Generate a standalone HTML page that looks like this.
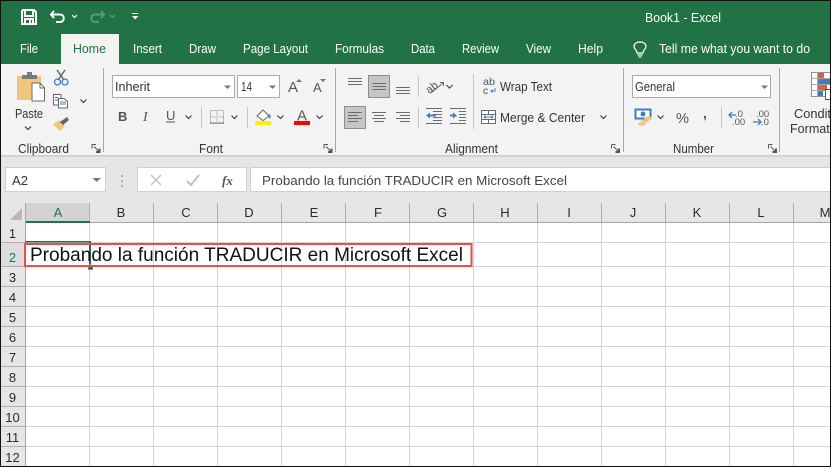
<!DOCTYPE html>
<html><head><meta charset="utf-8"><style>
html,body{margin:0;padding:0;width:831px;height:467px;overflow:hidden;background:#fff}
svg{display:block;position:absolute;left:0;top:0}
text{font-family:"Liberation Sans",sans-serif;font-size:13px;fill:#333}
.t{fill:#fff}
.h{fill:#2b2b2b;font-size:13px;text-anchor:middle}
.ln{stroke:#6a6a6a;stroke-width:1;fill:none}
.ch{stroke:#444;stroke-width:1.2;fill:none}
</style></head><body>
<svg width="831" height="467" viewBox="0 0 831 467" xmlns="http://www.w3.org/2000/svg">
<defs>
<path id="c" class="ch" d="M-3 -1.500L0 1.500L3 -1.500"/>
<g id="launch"><path d="M-4 -4H0M-4 -4V0M4 0V4H0M-2 -2L3 3M0 3H3V0" stroke="#555" fill="none" stroke-width="1"/></g>
</defs>
<!-- title bar -->
<rect width="831" height="64" fill="#217346"/>
<rect x="61" y="34" width="58" height="30" fill="#f3f3f3"/>
<rect y="64" width="831" height="91" fill="#f3f3f3"/>
<rect y="155" width="831" height="2" fill="#d2d2d2"/>
<rect y="157" width="831" height="46" fill="#e6e6e6"/>
<!-- QAT -->
<path d="M23 10H34L36 12V24H22V11Z M25 11V16H33V11 M25 24V19H33V24" fill="none" stroke="#fff" stroke-width="2"/>
<rect x="29" y="20" width="2" height="3" fill="#fff"/>
<path d="M54 11L51 14.500L54 18M52 14.500H60C65 14.500 65 22 60 22H56" fill="none" stroke="#fff" stroke-width="2"/>
<path d="M72 15l2.500 2.500l2.500 -2.500" fill="none" stroke="#fff" stroke-width="1.200"/>
<path d="M101 11L104 14.500L101 18M103 14.500H95C90 14.500 90 22 95 22H99" fill="none" stroke="#5c9a7b" stroke-width="2"/>
<path d="M110 15l2.500 2.500l2.500 -2.500" fill="none" stroke="#5c9a7b" stroke-width="1.200"/>
<path d="M132 13.500H138" stroke="#fff"/><path d="M132 16H138.500L135.200 19.500Z" fill="#fff"/>
<text class="t" x="645" y="22" textLength="76" lengthAdjust="spacingAndGlyphs">Book1  -  Excel</text>
<!-- tabs -->
<text class="t" x="20" y="53" textLength="18" lengthAdjust="spacingAndGlyphs">File</text>
<text x="73" y="53" textLength="33" lengthAdjust="spacingAndGlyphs" style="fill:#217346">Home</text>
<text class="t" x="133" y="53" textLength="29" lengthAdjust="spacingAndGlyphs">Insert</text>
<text class="t" x="189" y="53" textLength="27" lengthAdjust="spacingAndGlyphs">Draw</text>
<text class="t" x="243" y="53" textLength="65" lengthAdjust="spacingAndGlyphs">Page Layout</text>
<text class="t" x="335" y="53" textLength="49" lengthAdjust="spacingAndGlyphs">Formulas</text>
<text class="t" x="411" y="53" textLength="24" lengthAdjust="spacingAndGlyphs">Data</text>
<text class="t" x="462" y="53" textLength="37" lengthAdjust="spacingAndGlyphs">Review</text>
<text class="t" x="526" y="53" textLength="25" lengthAdjust="spacingAndGlyphs">View</text>
<text class="t" x="578" y="53" textLength="25" lengthAdjust="spacingAndGlyphs">Help</text>
<path d="M637 53C637 50 634 49 634 46.500C634 43.500 637 42 640 42C643 42 646 43.500 646 46.500C646 49 643 50 643 53ZM637.500 55H642.500M638.500 57H641.500" fill="none" stroke="#fff" stroke-width="1.200"/>
<text class="t" x="659" y="53" textLength="151" lengthAdjust="spacingAndGlyphs">Tell me what you want to do</text>
<!-- separators -->
<g fill="#a8a8a8">
<rect x="103" y="68" width="1" height="84"/><rect x="335" y="68" width="1" height="84"/>
<rect x="623" y="68" width="1" height="84"/><rect x="779" y="68" width="1" height="84"/>
</g>
<g fill="#c6c6c6">
<rect x="201" y="107" width="1" height="21"/><rect x="247" y="107" width="1" height="21"/>
<rect x="418" y="76" width="1" height="21"/><rect x="418" y="107" width="1" height="21"/>
<rect x="473" y="74" width="1" height="55"/><rect x="721" y="107" width="1" height="21"/>
</g>
<!-- clipboard -->
<path d="M17 76H41V100H17Z" fill="#f0c67c"/><rect x="22" y="75" width="15" height="4" fill="#7a7a7a"/><rect x="27" y="72" width="5" height="4" fill="#7a7a7a"/>
<path d="M32 83H40L44.500 88V101H32Z" fill="#fff" stroke="#6a6a6a"/><path d="M40 83V88H44.500" fill="none" stroke="#6a6a6a"/>
<text x="15" y="118" textLength="28" lengthAdjust="spacingAndGlyphs">Paste</text>
<use href="#c" x="28" y="128"/>
<path d="M57 70L64 80M65 70L58 80" stroke="#666" stroke-width="1.500"/>
<circle cx="57.500" cy="82" r="3" fill="none" stroke="#3f7fc0" stroke-width="1.300"/><circle cx="65" cy="82" r="3" fill="none" stroke="#3f7fc0" stroke-width="1.300"/>
<path d="M53.500 94.500H61V105H53.500Z" fill="#fff" stroke="#666"/><path d="M58.500 98.500H64L67.500 101.500V108H58.500Z" fill="#fff" stroke="#666"/>
<path d="M60 102H66M60 104H66" stroke="#3f7fc0"/><path d="M55 97.500H58M55 100H58" stroke="#666"/>
<use href="#c" x="83.500" y="101"/>
<path d="M53 124L60 120L65 126L60 131Z" fill="#f0c67c"/><path d="M60 122L67 117L69 120L63 125Z" fill="#666"/>
<text x="18" y="153" textLength="51" lengthAdjust="spacingAndGlyphs">Clipboard</text>
<use href="#launch" x="96" y="148.500"/>
<!-- font -->
<rect x="112.500" y="75.500" width="122" height="22" fill="#fff" stroke="#ababab"/>
<text x="115" y="91" textLength="35" lengthAdjust="spacingAndGlyphs">Inherit</text>
<path d="M224 85.500H231L227.500 89Z" fill="#777"/>
<rect x="237.500" y="75.500" width="42" height="22" fill="#fff" stroke="#ababab"/>
<text x="241" y="91" textLength="11" lengthAdjust="spacingAndGlyphs">14</text>
<path d="M269 85.500H276L272.500 89Z" fill="#777"/>
<text x="288" y="92" style="font-size:15px;fill:#555">A</text><path d="M296 82H302L299 79Z" fill="#3f7fc0"/>
<text x="313" y="92" style="font-size:13px;fill:#555">A</text><path d="M320 79H326L323 82Z" fill="#3f7fc0"/>
<text x="118" y="121" style="font-weight:bold;fill:#555">B</text>
<text x="143" y="121" style="font-style:italic;font-family:'Liberation Serif',serif;font-size:14px;fill:#555">I</text>
<text x="166" y="120" style="fill:#555">U</text><rect x="166" y="121.500" width="9" height="1" fill="#555"/>
<use href="#c" x="188.500" y="117"/>
<path d="M210.500 110.500H223.500V123.500H210.500ZM217 110.500V123.500M210.500 117H223.500" fill="none" stroke="#8c8c8c" stroke-dasharray="1 1"/>
<rect x="210" y="122.500" width="14" height="1" fill="#777"/>
<use href="#c" x="234.500" y="117"/>
<path d="M257 116L263 110L269 116L263 120.500Z" fill="#fff" stroke="#666"/><path d="M268 114C271 114 271 118 270 119C269 118 268 116 268 114Z" fill="#3f7fc0"/>
<rect x="255" y="121" width="16" height="4" fill="#fff200"/>
<use href="#c" x="280.500" y="117"/>
<text x="297" y="120.500" style="font-size:15px;fill:#555">A</text>
<rect x="294" y="121" width="16" height="4" fill="#f00"/>
<use href="#c" x="319.500" y="117"/>
<text x="199" y="153" textLength="24" lengthAdjust="spacingAndGlyphs">Font</text>
<use href="#launch" x="328" y="148.500"/>
<!-- alignment -->
<rect x="368.500" y="75.500" width="21" height="22" fill="#c6c6c6" stroke="#8f8f8f"/>
<rect x="344.500" y="106.500" width="21" height="22" fill="#c6c6c6" stroke="#8f8f8f"/>
<path class="ln" d="M348 78.500H362M348 81.500H362M348 84.500H362 M372.500 83.500H386M372.500 86.500H386M372.500 89.500H386 M396 87.500H410M396 90.500H410M396 93.500H410"/>
<path class="ln" d="M348 112.500H362M348 115.500H358M348 118.500H362M348 121.500H358 M372 112.500H386M374 115.500H384M372 118.500H386M374 121.500H384 M396 112.500H410M400 115.500H410M396 118.500H410M400 121.500H410"/>
<text x="425" y="90" transform="rotate(-38 433 86)" style="font-size:11px;fill:#555">ab</text>
<path d="M431 93L443 83M440 82.500H443.500V86" fill="none" stroke="#666"/>
<use href="#c" x="449.500" y="86.500"/>
<path class="ln" d="M433 111.500H442M433 114.500H442M433 117.500H442M433 120.500H442M426 123.500H442 M426 108.500H442"/>
<path d="M426 115.500L430 112.500V114.500H436V116.500H430V118.500Z" fill="#3f7fc0"/>
<path class="ln" d="M459 111.500H466M459 114.500H466M459 117.500H466M459 120.500H466M450 123.500H466 M450 108.500H466"/>
<path d="M457 115.500L453 112.500V114.500H450V116.500H453V118.500Z" fill="#3f7fc0"/>
<text x="483" y="85" style="font-size:10.500px;fill:#555" textLength="12" lengthAdjust="spacingAndGlyphs">ab</text>
<text x="483" y="94" style="font-size:10.500px;fill:#555">c</text>
<path d="M495 88V91H491M492.500 89.500L491 91L492.500 92.500" fill="none" stroke="#3f7fc0"/>
<text x="500" y="91" textLength="52" lengthAdjust="spacingAndGlyphs">Wrap Text</text>
<rect x="481.500" y="110.500" width="14" height="13" fill="#fff" stroke="#6a6a6a"/>
<path d="M481.500 114.500H495.500M481.500 119.500H495.500M488.500 110.500V114.500M488.500 119.500V123.500" stroke="#6a6a6a" fill="none"/>
<path d="M484 117H493M485.500 115.500L484 117L485.500 118.500M491.500 115.500L493 117L491.500 118.500" stroke="#3f7fc0" fill="none"/>
<text x="500" y="122" textLength="85" lengthAdjust="spacingAndGlyphs">Merge &amp; Center</text>
<use href="#c" x="603.500" y="117"/>
<text x="445" y="153" textLength="53" lengthAdjust="spacingAndGlyphs">Alignment</text>
<use href="#launch" x="615.500" y="148.500"/>
<!-- number -->
<rect x="632.500" y="75.500" width="138" height="22" fill="#fff" stroke="#ababab"/>
<text x="635" y="91" textLength="40" lengthAdjust="spacingAndGlyphs">General</text>
<path d="M761 85.500H768L764.500 89Z" fill="#777"/>
<rect x="635.500" y="109.500" width="15" height="9" fill="#fff" stroke="#3f7fc0" stroke-width="2"/>
<circle cx="643" cy="114" r="2.500" fill="#3f7fc0"/>
<ellipse cx="648" cy="118" rx="4" ry="1.700" fill="#f0c67c"/><ellipse cx="645" cy="121" rx="4" ry="1.700" fill="#f0c67c"/><ellipse cx="642" cy="124" rx="4" ry="1.700" fill="#f0c67c"/>
<use href="#c" x="660.500" y="117"/>
<text x="676" y="123" style="font-size:15px;fill:#555" textLength="13" lengthAdjust="spacingAndGlyphs">%</text>
<text x="703" y="118" style="font-size:14px;font-weight:bold;fill:#555">,</text>
<text x="735" y="117" style="font-size:9.500px;fill:#555">.0</text><text x="732" y="125" style="font-size:9.500px;fill:#555">.00</text>
<path d="M729 115H736M732 112L729 115L732 118" stroke="#3f7fc0" fill="none" stroke-width="1.300"/>
<text x="756" y="117" style="font-size:9.500px;fill:#555">.00</text><text x="761" y="125" style="font-size:9.500px;fill:#555">.0</text>
<path d="M753 122H761M758 119L761 122L758 125" stroke="#3f7fc0" fill="none" stroke-width="1.300"/>
<text x="673" y="153" textLength="41" lengthAdjust="spacingAndGlyphs">Number</text>
<use href="#launch" x="772.500" y="148.500"/>
<!-- conditional -->
<rect x="811.500" y="72.500" width="20" height="24" fill="#fff" stroke="#8f8f8f"/>
<path d="M811 78.500H831M811 84.500H831M811 90.500H831M817.500 72V97" stroke="#a8a8a8"/>
<rect x="818" y="73" width="6" height="5" fill="#d8603c"/><rect x="818" y="79" width="13" height="5" fill="#3f7fc0"/><rect x="818" y="85" width="9" height="5" fill="#d8603c"/><rect x="818" y="91" width="5" height="5" fill="#3f7fc0"/>
<rect x="825.500" y="89.500" width="6" height="10" fill="#fff" stroke="#555"/>
<text x="794" y="118" textLength="64" lengthAdjust="spacingAndGlyphs">Conditional</text>
<text x="790" y="133" textLength="60" lengthAdjust="spacingAndGlyphs">Formatting</text>
<!-- formula bar -->
<rect x="5.500" y="167.500" width="100" height="24" fill="#fff" stroke="#cfcfcf"/>
<text x="12" y="185" textLength="16" lengthAdjust="spacingAndGlyphs">A2</text>
<path d="M92.500 178H101L96.700 182Z" fill="#777"/>
<path d="M122 175v2M122 180v2M122 185v2" stroke="#9a9a9a" stroke-width="1.500"/>
<rect x="137.500" y="167.500" width="109" height="24" fill="#fff" stroke="#cfcfcf"/>
<path d="M151 175L161 185M161 175L151 185" stroke="#c2c2c2" stroke-width="1.500"/>
<path d="M187 181L191 185L199 175" stroke="#c2c2c2" stroke-width="2" fill="none"/>
<text x="222" y="185" style="font-family:'Liberation Serif',serif;font-style:italic;font-size:13px;fill:#555;font-weight:bold">fx</text>
<rect x="250.500" y="167.500" width="581" height="24" fill="#fff" stroke="#cfcfcf"/>
<text x="262" y="185" textLength="305" lengthAdjust="spacingAndGlyphs" style="fill:#444">Probando la función TRADUCIR en Microsoft Excel</text>
<!-- headers -->
<rect x="0" y="203" width="831" height="19" fill="#e6e6e6"/>
<rect x="0" y="222" width="25" height="245" fill="#e6e6e6"/>
<rect x="26" y="203" width="64" height="19" fill="#d2d2d2"/>
<rect x="0" y="243" width="25" height="23" fill="#dcdcdc"/>
<path d="M10 220H22V208Z" fill="#b8b8b8"/>
<rect x="25" y="222" width="806" height="245" fill="#fff"/>
<rect x="25" y="222" width="806" height="1" fill="#a6a6a6"/>
<rect x="25" y="203" width="1" height="264" fill="#a6a6a6"/>
<!-- grid -->
<g fill="#d4d4d4">
<rect x="89" y="223" width="1" height="244"/><rect x="153" y="223" width="1" height="244"/><rect x="217" y="223" width="1" height="244"/><rect x="281" y="223" width="1" height="244"/><rect x="345" y="223" width="1" height="244"/><rect x="409" y="223" width="1" height="244"/><rect x="473" y="223" width="1" height="244"/><rect x="537" y="223" width="1" height="244"/><rect x="601" y="223" width="1" height="244"/><rect x="665" y="223" width="1" height="244"/><rect x="729" y="223" width="1" height="244"/><rect x="793" y="223" width="1" height="244"/>
<rect x="26" y="242" width="805" height="1"/><rect x="26" y="266" width="805" height="1"/><rect x="26" y="286" width="805" height="1"/><rect x="26" y="306" width="805" height="1"/><rect x="26" y="326" width="805" height="1"/><rect x="26" y="346" width="805" height="1"/><rect x="26" y="366" width="805" height="1"/><rect x="26" y="386" width="805" height="1"/><rect x="26" y="406" width="805" height="1"/><rect x="26" y="426" width="805" height="1"/><rect x="26" y="446" width="805" height="1"/>
</g>
<g fill="#b0b0b0">
<rect x="89" y="203" width="1" height="19"/><rect x="153" y="203" width="1" height="19"/><rect x="217" y="203" width="1" height="19"/><rect x="281" y="203" width="1" height="19"/><rect x="345" y="203" width="1" height="19"/><rect x="409" y="203" width="1" height="19"/><rect x="473" y="203" width="1" height="19"/><rect x="537" y="203" width="1" height="19"/><rect x="601" y="203" width="1" height="19"/><rect x="665" y="203" width="1" height="19"/><rect x="729" y="203" width="1" height="19"/><rect x="793" y="203" width="1" height="19"/>
<rect y="242" width="25" height="1"/><rect y="266" width="25" height="1"/><rect y="286" width="25" height="1"/><rect y="306" width="25" height="1"/><rect y="326" width="25" height="1"/><rect y="346" width="25" height="1"/><rect y="366" width="25" height="1"/><rect y="386" width="25" height="1"/><rect y="406" width="25" height="1"/><rect y="426" width="25" height="1"/><rect y="446" width="25" height="1"/>
</g>
<rect x="26" y="221" width="64" height="2" fill="#217346"/>
<text class="h" x="58" y="217" style="fill:#217346">A</text><text class="h" x="121" y="217">B</text><text class="h" x="186" y="217">C</text><text class="h" x="249" y="217">D</text><text class="h" x="314" y="217">E</text><text class="h" x="378" y="217">F</text><text class="h" x="442" y="217">G</text><text class="h" x="505" y="217">H</text><text class="h" x="569" y="217">I</text><text class="h" x="633" y="217">J</text><text class="h" x="697" y="217">K</text><text class="h" x="761" y="217">L</text><text class="h" x="825" y="217">M</text>
<text class="h" x="12.500" y="238">1</text><text class="h" x="12.500" y="262" style="fill:#217346">2</text><text class="h" x="12.500" y="282">3</text><text class="h" x="12.500" y="302">4</text><text class="h" x="12.500" y="322">5</text><text class="h" x="12.500" y="342">6</text><text class="h" x="12.500" y="362">7</text><text class="h" x="12.500" y="382">8</text><text class="h" x="12.500" y="402">9</text><text class="h" x="12.500" y="422">10</text><text class="h" x="12.500" y="442">11</text><text class="h" x="12.500" y="462">12</text>
<!-- selection -->
<rect x="25" y="241" width="65" height="1.500" fill="#217346"/>
<rect x="89" y="241" width="2" height="26" fill="#217346"/>
<rect x="25" y="265.500" width="65" height="1.500" fill="#217346"/>
<rect x="88" y="265" width="5" height="5" fill="#217346" stroke="#fff" stroke-width="0.500"/>
<text x="30" y="261" textLength="433" lengthAdjust="spacingAndGlyphs" style="font-size:19px;fill:#111">Probando la función TRADUCIR en Microsoft Excel</text>
<rect x="25" y="244" width="446.500" height="22" fill="none" stroke="#ea4f47" stroke-width="2"/>
<!-- frame -->
<rect x="0.500" y="0.500" width="830" height="466" fill="none" stroke="#111"/>
</svg>
</body></html>
